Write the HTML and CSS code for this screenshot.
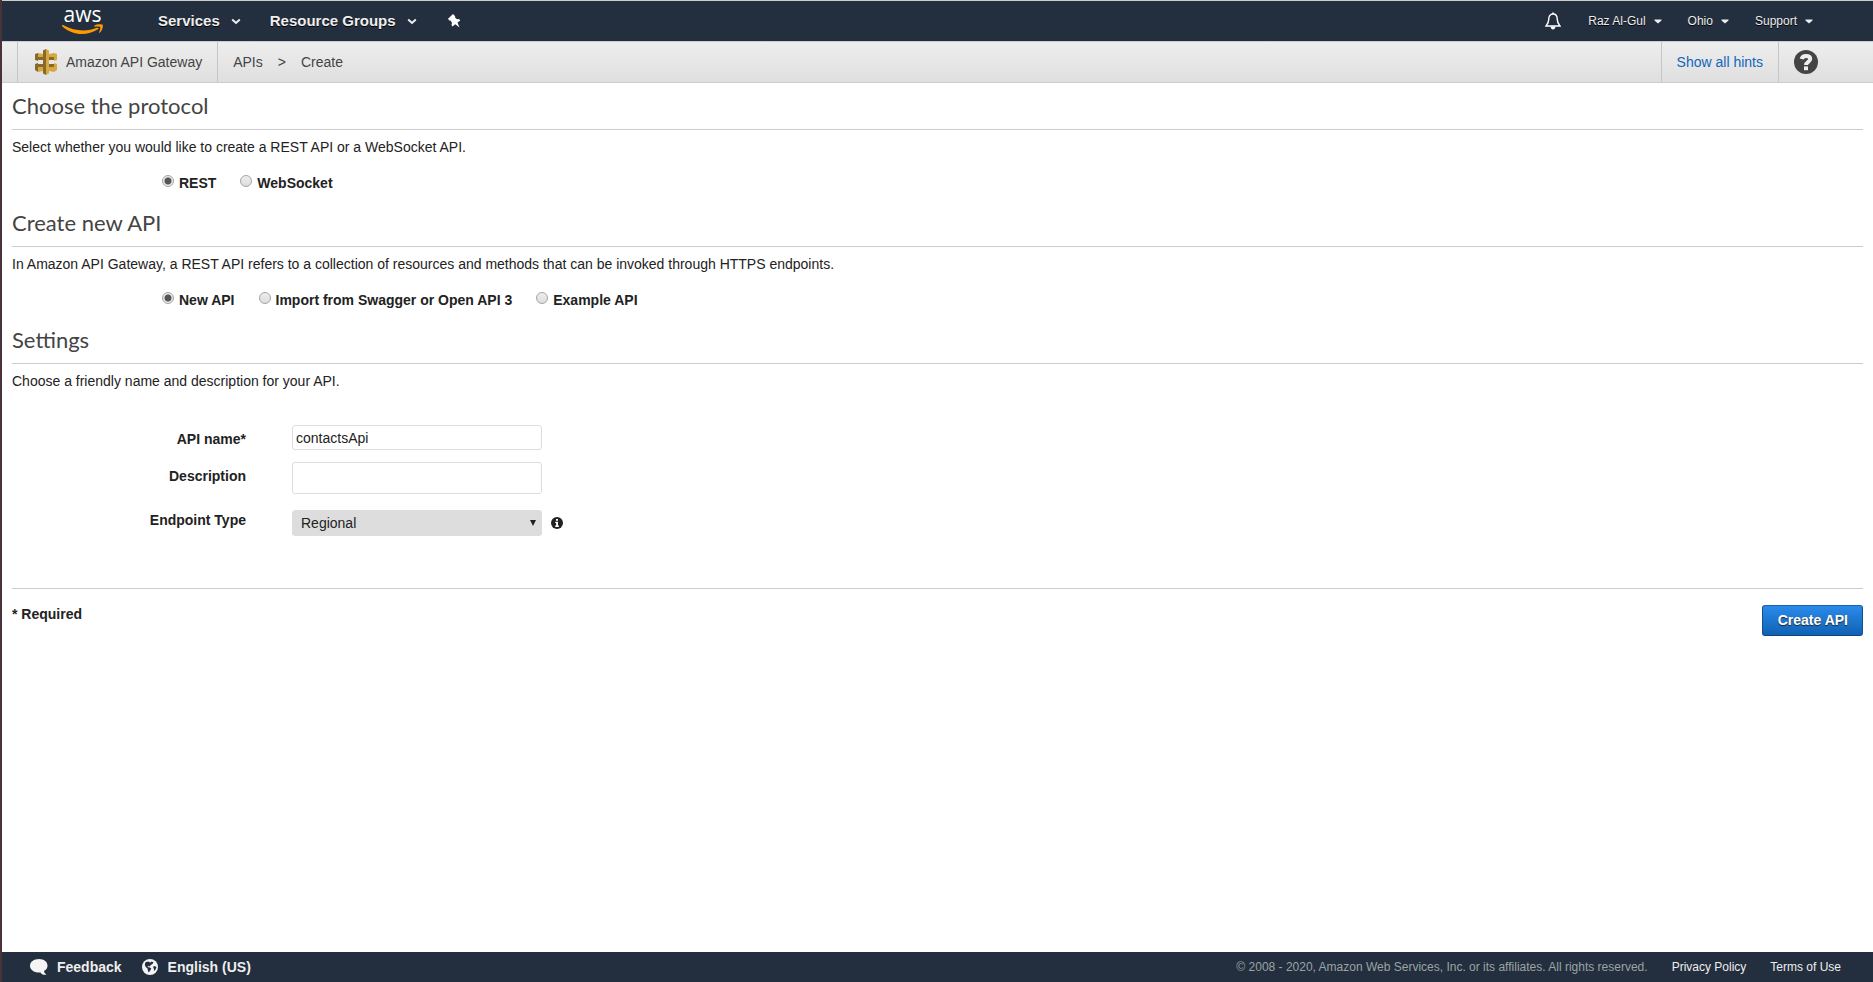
FILE: index.html
```html
<!DOCTYPE html>
<html lang="en">
<head>
<meta charset="utf-8">
<title>API Gateway</title>
<link rel="stylesheet" href="styles.css">
</head>
<body>
<header class="topnav">
  <a class="logo" href="#" aria-label="AWS home">
    <span class="logo-text">aws</span>
    <svg class="logo-smile" viewBox="0 0 41 11" width="41" height="11"><path d="M0 1.300C.2.800 1 .900 1.500 1.300C13 7.900 26 7.500 35 3.800C36.500 3.200 37.300 4.300 36 5.300C25 12.600 10 11.500.4 2.600C.1 2.200-.1 1.800 0 1.300Z" fill="#f90"/><path d="M32.500 1.600C34.500 0 39.500-.3 40.700.8C41.500 2.500 39.800 7 37.800 8.700C37.300 9 36.800 8.700 37.100 8.200C37.800 6.500 38.700 3.900 38 3.100C37.300 2.400 34.800 2.600 33 2.800C32.300 2.800 32.100 2 32.500 1.600Z" fill="#f90"/></svg>
  </a>
  <nav class="menu">
    <button class="menu-item">Services <svg width="10" height="7" viewBox="0 0 10 7"><path d="M1.200 1.500l3.800 3.500 3.800-3.500" fill="none" stroke="#eee" stroke-width="2"/></svg></button>
    <button class="menu-item">Resource Groups <svg width="10" height="7" viewBox="0 0 10 7"><path d="M1.200 1.500l3.800 3.500 3.800-3.500" fill="none" stroke="#eee" stroke-width="2"/></svg></button>
    <button class="menu-item" aria-label="Pin"><svg width="13" height="14" viewBox="0 0 13 14"><path d="M5 0L7.200 2.200 6.900 3.200 9 5.200 11 5.100 12.300 6.500 9.500 8.600 11.500 13.500 7.300 10.300 4.500 12.500 3.500 11 4 8.700 2.500 6.500 1.300 6.500 0 4.700Z" fill="#fff"/></svg></button>
  </nav>
  <nav class="account">
    <button class="bell" aria-label="Notifications"><svg width="16" height="18" viewBox="0 0 16 18"><path d="M8 2C4.800 2 3.800 4.500 3.800 7C3.800 10.500 2.500 12 1 14H15C13.500 12 12.200 10.500 12.200 7C12.200 4.500 11.200 2 8 2Z" fill="none" stroke="#fff" stroke-width="1.400"/><path d="M7.200.5h1.600V2H7.200zM5.500 14.500h5Q10 17.500 8 17.500T5.500 14.500Z" fill="#fff"/></svg></button>
    <button class="account-item">Raz Al-Gul <svg width="8" height="5" viewBox="0 0 8 5"><path d="M.5.500h7v1L4 4.500.5 1.500z" fill="#eee"/></svg></button>
    <button class="account-item">Ohio <svg width="8" height="5" viewBox="0 0 8 5"><path d="M.5.500h7v1L4 4.500.5 1.500z" fill="#eee"/></svg></button>
    <button class="account-item">Support <svg width="8" height="5" viewBox="0 0 8 5"><path d="M.5.500h7v1L4 4.500.5 1.500z" fill="#eee"/></svg></button>
  </nav>
</header>

<div class="subnav">
  <a class="service" href="#">
    <svg width="22" height="26" viewBox="0 0 22 26">
      <path d="M0 5l3-1v8l-3-1zM0 15l3-1v9l-3-2zM3 8h5v3H3zM3 15h5v3H3z" fill="#876929"/>
      <path d="M3 4l5 1v3H3zM3 18h5v4l-5 1zM14 5l5-1 3 1v6l-3 1V8h-5zM19 14l3 1v6l-3 2-5-1v-4h5z" fill="#d9a741"/>
      <path d="M14 8h5v3h-5zM14 15h5v3h-5z" fill="#876929"/>
      <path d="M8 1.500L11 0V26L8 24.500Z" fill="#876929"/><path d="M11 0l3 1.500v23L11 26z" fill="#d9a741"/>
    </svg>
    Amazon API Gateway
  </a>
  <nav class="crumbs"><a href="#">APIs</a><span>&gt;</span><span>Create</span></nav>
  <a class="hints" href="#">Show all hints</a>
  <button class="help" aria-label="Help"><svg width="24" height="24" viewBox="0 0 24 24"><circle cx="12" cy="12" r="12" fill="#444"/><path d="M7.600 9C8.300 6.800 10 6 12 6C14.600 6 16.200 7.200 16.200 9.100C16.200 11.900 12.100 11.700 12.100 15" fill="none" stroke="#eee" stroke-width="4"/><path d="M10 16.400h4v3.800h-4z" fill="#eee"/></svg></button>
</div>

<main class="content">
  <section>
    <h2>Choose the protocol</h2>
    <p>Select whether you would like to create a REST API or a WebSocket API.</p>
    <div class="choices">
      <label><input type="radio" name="protocol" checked>REST</label>
      <label><input type="radio" name="protocol">WebSocket</label>
    </div>
  </section>
  <section>
    <h2>Create new API</h2>
    <p>In Amazon API Gateway, a REST API refers to a collection of resources and methods that can be invoked through HTTPS endpoints.</p>
    <div class="choices">
      <label><input type="radio" name="source" checked>New API</label>
      <label><input type="radio" name="source">Import from Swagger or Open API 3</label>
      <label><input type="radio" name="source">Example API</label>
    </div>
  </section>
  <section>
    <h2>Settings</h2>
    <p>Choose a friendly name and description for your API.</p>
    <form class="settings" id="settings">
      <div class="field"><label for="name">API name*</label><input class="control" id="name" type="text" value="contactsApi"></div>
      <div class="field"><label for="description">Description</label><textarea class="control" id="description" rows="1"></textarea></div>
      <div class="field"><label for="endpoint">Endpoint Type</label>
        <span class="select-box"><select class="control" id="endpoint"><option>Regional</option></select><svg class="arrow" width="6" height="6" viewBox="0 0 6 6"><path d="M0 0h6L3 6z" fill="#222"/></svg></span>
        <svg class="info" width="12" height="12" viewBox="0 0 12 12"><circle cx="6" cy="6" r="6" fill="#222"/><path d="M5 2h2v1.700H5zM4.200 4.700H7v3.800h.9V10H4.200V8.500h.9V6h-.9z" fill="#fff"/></svg>
      </div>
    </form>
  </section>
  <div class="actions">
    <strong>* Required</strong>
    <button class="primary" form="settings" type="button">Create API</button>
  </div>
</main>

<footer class="footer">
  <a class="footer-main" href="#"><svg width="18" height="16" viewBox="0 0 18 16"><path d="M9 0C14 0 17.500 2.800 17.500 6.700C17.500 9 16 11 14 12C14 13.500 15 14.800 16.500 15.500C14 16.200 11.500 15.200 10.500 13.400C4.500 14 0 11 0 6.700C0 2.800 4 0 9 0Z" fill="#f4f4f4"/></svg>Feedback</a>
  <a class="footer-main" href="#"><svg width="16" height="16" viewBox="0 0 16 16"><circle cx="8" cy="8" r="8" fill="#f4f4f4"/><path d="M3.500 3.200L6 2.500 8.500 3.500 9.500 2.500 11.500 3.200 10.500 5 8.800 6 7.500 7.500 6 7 5.500 8 8 8.500 9.300 9.500 8.500 11 7.500 12.500 6.800 13.500 6 12 5.500 9.500 3.500 7.800 2.800 5.500ZM11 7.800L13 7 14.500 8.200 13.500 10.500 12.200 12 11.800 9.800Z" fill="#232f3e"/></svg>English (US)</a>
  <small class="copyright">© 2008 - 2020, Amazon Web Services, Inc. or its affiliates. All rights reserved.</small>
  <a href="#">Privacy Policy</a>
  <a href="#">Terms of Use</a>
</footer>
</body>
</html>
```
FILE: styles.css
```css
* { box-sizing: border-box; }

body {
  margin: 0;
  min-height: 100vh;
  display: flex;
  flex-direction: column;
  border-left: 2px solid #49333a;
  background: #fff;
  color: #222;
  font: 14px/20px "Liberation Sans", Arial, sans-serif;
}

a { color: inherit; text-decoration: none; }
button { border: 0; padding: 0; background: none; color: inherit; font: inherit; cursor: pointer; }
svg { display: block; flex: none; }
h2, p { margin: 0; }

.topnav {
  display: flex;
  align-items: center;
  height: 41px;
  padding: 0 60px;
  border-top: 1px solid #ccc;
  background: #232f3e;
  color: #eee;
  text-shadow: 0 1px 0 #000;
}
.logo { width: 41px; text-shadow: none; }
.logo-text { display: block; height: 15px; color: #fff; font: 21px/12px "Open Sans", sans-serif; text-align: center; }
.logo-smile { margin-top: 1px; }
.menu, .account, .menu-item, .account-item { display: flex; align-items: center; }
.menu { gap: 29px; margin-left: 55px; }
.menu-item { gap: 11px; font-size: 15px; font-weight: bold; text-shadow: inherit; }
.menu-item:last-child { margin-left: 2px; }
.account { gap: 25px; margin-left: auto; font-size: 12px; }
.account-item { gap: 8px; text-shadow: inherit; }
.account-item + .account-item { margin-left: 1px; }
.bell { margin-right: 2px; }

.subnav {
  display: flex;
  height: 42px;
  padding: 0 40px 0 15px;
  border: solid #ccc;
  border-width: 1px 0;
  background: linear-gradient(#eee, #dfdfdf);
  color: #444;
}
.subnav > * { display: flex; align-items: center; padding: 0 15px; }
.service { gap: 9px; border: solid #c6c6c6; border-width: 0 1px; }
.subnav .service { padding-left: 17px; }
.crumbs { gap: 15px; }
.hints { margin-left: auto; border: solid #c6c6c6; border-width: 0 1px; color: #1166bb; }

.content { flex: 1; padding: 11px 10px 0; }
h2 {
  height: 36px;
  border-bottom: 1px solid #ccc;
  color: #444;
  font: 22px/24px Lato, Carlito, sans-serif;
}
p { margin-top: 7px; }
.choices { display: flex; gap: 24px; margin: 16px 0 18px 150px; font-weight: bold; }
.choices label { display: flex; gap: 5px; }
.choices input {
  appearance: none;
  width: 12px;
  height: 12px;
  margin: 2px 0 0;
  border: 1px solid #a5a5a5;
  border-radius: 50%;
  background: linear-gradient(#eee, #ddd);
}
.choices input:checked { background: radial-gradient(circle, #555 0 3px, #e8e8e8 4px); }

.settings { display: grid; margin-top: 34px; gap: 12px; }
.field { display: flex; align-items: flex-start; }
.field label { width: 234px; padding-top: 4px; font-weight: bold; text-align: right; margin-right: 46px; }
.control {
  display: block;
  width: 250px;
  height: 25px;
  padding: 2px 3px;
  border: 1px solid #ddd;
  border-radius: 3px;
  background: #fff;
  color: #222;
  font: inherit;
}
textarea.control { height: 32px; resize: none; }
.field:last-child { margin-top: 4px; align-items: center; }
.field:last-child label { padding: 0 0 6px; }
.select-box { position: relative; }
select.control { height: 26px; padding: 0 8px; appearance: none; background: #ddd; }
.arrow { position: absolute; right: 6px; top: 10px; pointer-events: none; }
.info { margin-left: 9px; }

.actions {
  display: flex;
  justify-content: space-between;
  align-items: flex-start;
  margin-top: 52px;
  padding-top: 16px;
  border-top: 1px solid #ccc;
  line-height: 18px;
}
.primary {
  padding: 5px 14px 6px 15px;
  border: 1px solid;
  border-color: #1b63b0 #14508f #0d4580;
  border-radius: 3px;
  background: linear-gradient(#2b8aea, #0f62b4);
  color: #fff;
  font-weight: bold;
  text-shadow: 0 1px 1px #222;
}

.footer {
  display: flex;
  align-items: center;
  gap: 24px;
  height: 30px;
  padding: 0 32px 0 28px;
  background: #232f3e;
  color: #eee;
  font-size: 12px;
}
.footer-main { display: flex; align-items: center; gap: 9px; font-size: 14px; font-weight: bold; }
.footer-main + .footer-main { gap: 10px; margin-left: -4px; }
.copyright { margin-left: auto; color: #9ba3a5; font-size: inherit; }
```
